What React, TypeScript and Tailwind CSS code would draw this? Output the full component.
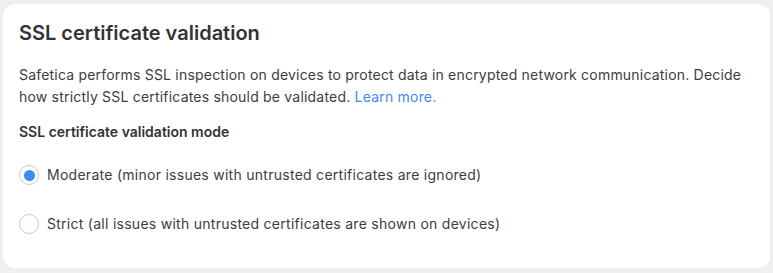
import { useState } from 'react'

const OPTIONS = [
  { id: 'moderate', label: 'Moderate (minor issues with untrusted certificates are ignored)' },
  { id: 'strict', label: 'Strict (all issues with untrusted certificates are shown on devices)' },
]

export default function App() {
  const [mode, setMode] = useState('moderate')

  return (
    <div className="min-h-screen bg-[#efefef] px-[3px] pt-1 font-['Inter',sans-serif]">
      <div className="w-[767px] h-[264px] bg-white rounded-xl px-4 pt-[16px]">
        <h2 className="text-[20px] leading-[26px] font-semibold text-[#333333]">SSL certificate validation</h2>

        <p className="mt-[18px] text-[14px] leading-[22px] tracking-[0.2px] text-[#3d3d3d]">
          Safetica performs SSL inspection on devices to protect data in encrypted network communication. Decide
          how strictly SSL certificates should be validated.{' '}
          <a href="#" className="text-[#3b8cf0]">Learn more.</a>
        </p>

        <div className="mt-[14px] text-[14px] leading-[20px] font-semibold text-[#333333]">
          SSL certificate validation mode
        </div>

        <div className="mt-[23px] flex flex-col gap-[29px]">
          {OPTIONS.map(o => (
            <label key={o.id} className="flex items-center gap-[8px] cursor-pointer" onClick={() => setMode(o.id)}>
              <span className="w-[20px] h-[20px] rounded-full border border-[#c8c8c8] flex items-center justify-center bg-white">
                {mode === o.id && <span className="w-[11px] h-[11px] rounded-full bg-[#3b8cf0]" />}
              </span>
              <span className="text-[14px] leading-[20px] tracking-[0.27px] text-[#3d3d3d]">{o.label}</span>
            </label>
          ))}
        </div>
      </div>
    </div>
  )
}
